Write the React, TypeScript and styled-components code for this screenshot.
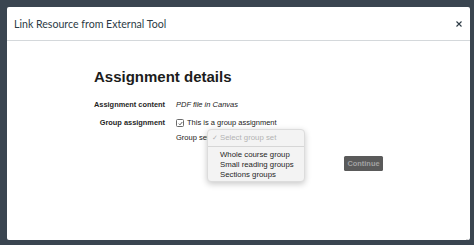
import React from "react";
import styled, { createGlobalStyle } from "styled-components";

const Global = createGlobalStyle`
  html, body { margin: 0; padding: 0; background: #3a4550; }
  body { width: 474px; height: 245px; overflow: hidden; }
  #root { height: 245px; }
`;

const Backdrop = styled.div`
  height: 245px;
  padding: 7px 4px 5px 7px;
  box-sizing: border-box;
  display: flex;
`;

const Dialog = styled.div`
  position: relative;
  flex: 1;
  background: #ffffff;
  border-radius: 2px;
  display: flex;
  flex-direction: column;
  overflow: hidden;
`;

const Header = styled.div`
  height: 34px;
  box-sizing: border-box;
  border-bottom: 1px solid #d4d8db;
  display: flex;
  align-items: center;
  justify-content: space-between;
  padding: 0 6px 0 7px;
`;

const Title = styled.h1`
  margin: 0;
  font-family: Lato, "Liberation Sans", sans-serif;
  font-weight: 400;
  font-size: 10.6px;
  color: #2d3b45;
`;

const Close = styled.button`
  border: none;
  background: none;
  padding: 0;
  width: 10px;
  height: 10px;
  display: flex;
  align-items: center;
  justify-content: center;
  color: #2d3b45;
`;

const Body = styled.div`
  flex: 1;
  display: flex;
  justify-content: center;
  padding-top: 27px;
`;

const Content = styled.div`
  width: 289px;
  font-family: "Liberation Sans", Arial, sans-serif;
  color: #1f1f1f;
  display: flex;
  flex-direction: column;
`;

const Heading = styled.h2`
  margin: 0 0 14px 0;
  font-size: 15px;
  line-height: 18px;
  font-weight: 700;
  color: #1c1c1c;
`;

const Fields = styled.div`
  display: grid;
  grid-template-columns: 71px 1fr;
  column-gap: 11px;
  align-items: center;
`;

const Label = styled.div<{ $gap: number }>`
  font-size: 7.4px;
  font-weight: 700;
  text-align: right;
  white-space: nowrap;
  line-height: 10px;
  margin-bottom: ${(p) => p.$gap}px;
`;

const Value = styled.div<{ $gap: number; $italic?: boolean }>`
  font-size: 7.5px;
  line-height: 10px;
  font-style: ${(p) => (p.$italic ? "italic" : "normal")};
  color: #222;
  display: flex;
  align-items: center;
  gap: 3px;
  white-space: nowrap;
  margin-bottom: ${(p) => p.$gap}px;
`;

const Check = styled.span`
  width: 6px;
  height: 6px;
  border: 0.8px solid #6b6b6b;
  border-radius: 1.5px;
  display: inline-flex;
  align-items: center;
  justify-content: center;
  background: #fff;
`;

const SelectRow = styled.div`
  position: relative;
  font-size: 7.5px;
  line-height: 10px;
  color: #222;
  white-space: nowrap;
`;

const Menu = styled.div`
  position: absolute;
  left: 31px;
  top: -4px;
  width: 98px;
  height: 53px;
  box-sizing: border-box;
  background: #f3f3f3;
  border: 1px solid #dcdcdc;
  border-radius: 4px;
  box-shadow: 0 2px 6px rgba(0, 0, 0, 0.22);
  padding: 3px 0;
  font-size: 7.8px;
  color: #222;
`;

const MenuItem = styled.div<{ $muted?: boolean }>`
  height: 9.8px;
  line-height: 9.8px;
  padding-left: 12px;
  position: relative;
  color: ${(p) => (p.$muted ? "#b4b4b4" : "#262626")};
`;

const Tick = styled.span`
  position: absolute;
  left: 4px;
  top: 0;
  color: #b4b4b4;
  font-size: 7px;
`;

const Separator = styled.div`
  height: 1px;
  background: #d6d6d6;
  margin: 3.5px 0 3px 0;
`;

const Footer = styled.div`
  display: flex;
  justify-content: flex-end;
  margin-top: 13px;
`;

const ContinueButton = styled.button`
  width: 39px;
  height: 15px;
  border: none;
  border-radius: 1.5px;
  background: #5a5a5a;
  color: #a2a2a2;
  font-family: "Liberation Sans", Arial, sans-serif;
  font-size: 7.4px;
  font-weight: 700;
  padding: 0;
`;

const Grip = styled.div`
  position: absolute;
  right: 2px;
  bottom: 2px;
  width: 7px;
  height: 7px;
`;

export default function App() {
  return (
    <>
      <Global />
      <Backdrop>
        <Dialog>
          <Header>
            <Title>Link Resource from External Tool</Title>
            <Close aria-label="Close">
              <svg width="6" height="6" viewBox="0 0 6 6">
                <path d="M0.5 0.5 L5.5 5.5 M5.5 0.5 L0.5 5.5" stroke="#2d3b45" strokeWidth="1.1" />
              </svg>
            </Close>
          </Header>
          <Body>
            <Content>
              <Heading>Assignment details</Heading>
              <Fields>
                <Label $gap={8}>Assignment content</Label>
                <Value $gap={8} $italic>PDF file in Canvas</Value>
                <Label $gap={5}>Group assignment</Label>
                <Value $gap={5}>
                  <Check>
                    <svg width="5" height="5" viewBox="0 0 5 5">
                      <path d="M0.8 2.6 L2 3.8 L4.3 1" fill="none" stroke="#333" strokeWidth="0.8" />
                    </svg>
                  </Check>
                  This is a group assignment
                </Value>
                <div />
                <SelectRow>
                  Group set
                  <Menu>
                    <MenuItem $muted>
                      <Tick>✓</Tick>Select group set
                    </MenuItem>
                    <Separator />
                    <MenuItem>Whole course group</MenuItem>
                    <MenuItem>Small reading groups</MenuItem>
                    <MenuItem>Sections groups</MenuItem>
                  </Menu>
                </SelectRow>
              </Fields>
              <Footer>
                <ContinueButton>Continue</ContinueButton>
              </Footer>
            </Content>
          </Body>
          <Grip>
            <svg width="7" height="7" viewBox="0 0 7 7">
              <path d="M6.5 1 L1 6.5 M6.5 3.5 L3.5 6.5 M6.5 5.5 L5.5 6.5" stroke="#8a8a8a" strokeWidth="0.7" />
            </svg>
          </Grip>
        </Dialog>
      </Backdrop>
    </>
  );
}
